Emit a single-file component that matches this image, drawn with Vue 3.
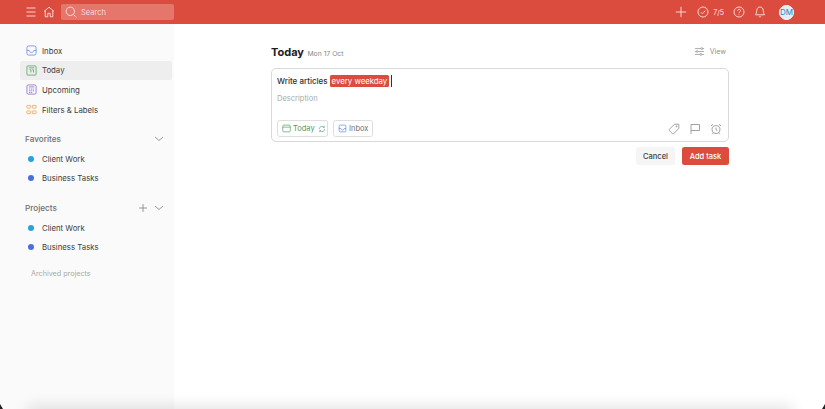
<script setup>
const favorites = [
  { name: 'Client Work', color: '#2aa0dc' },
  { name: 'Business Tasks', color: '#4a6ee0' }
]
const projects = favorites
</script>

<template>
  <div class="app">
    <header class="topbar">
      <div class="left">
        <svg class="ic menu" viewBox="0 0 12 12" width="12" height="12"><path d="M1.500 2h9M1.500 6h9M1.500 10h9" /></svg>
        <svg class="ic home" viewBox="0 0 12 12" width="12" height="12"><path d="M1 5.500 6 1.200l5 4.300M2.200 4.600v6.200h2.600V7.300h2.400v3.500h2.600V4.600" /></svg>
        <div class="search">
          <svg class="ic" viewBox="0 0 12 12" width="12" height="12"><circle cx="5.300" cy="5.300" r="4.200" /><path d="m8.300 8.300 3 3" /></svg>
          <span>Search</span>
        </div>
      </div>
      <div class="right">
        <svg class="ic plus" viewBox="0 0 12 12" width="12" height="12"><path d="M6 .8v10.400M.8 6h10.400" /></svg>
        <div class="karma">
          <svg class="ic" viewBox="0 0 12 12" width="12" height="12"><circle cx="6" cy="6" r="5" /><path d="m3.800 6.100 1.600 1.600 3-3" /></svg>
          <span>7/5</span>
        </div>
        <svg class="ic help" viewBox="0 0 12 12" width="12" height="12"><circle cx="6" cy="6" r="5" /><path d="M4.600 4.800c0-1.900 2.900-1.900 2.900-.1 0 1.100-1.500 1.200-1.500 2.400M6 8.300v.8" /></svg>
        <svg class="ic bell" viewBox="0 0 12 12" width="12" height="12"><path d="M6 1c-2 0-3.200 1.500-3.200 3.300 0 2.700-1.200 3.700-1.300 4.500h9c-.1-.8-1.300-1.800-1.300-4.500C9.200 2.500 8 1 6 1zM4.800 10.300c.5.700 1.900.7 2.400 0" /></svg>
        <div class="avatar">DM</div>
      </div>
    </header>

    <div class="body">
      <aside class="sidebar">
        <nav class="nav">
          <div class="row">
            <svg class="navic" viewBox="0 0 12 12" width="11" height="11" stroke="#6f8fd8"><path d="M1 3a2 2 0 0 1 2-2h6a2 2 0 0 1 2 2v6a2 2 0 0 1-2 2H3a2 2 0 0 1-2-2zM1 6h2.500c.5 1.500 1.300 2.300 2.500 2.300S8 7.500 8.500 6H11" /></svg>
            <span>Inbox</span>
          </div>
          <div class="row active">
            <svg class="navic" viewBox="0 0 12 12" width="11" height="11" stroke="#5ba56a"><rect x="1" y="1" width="10" height="10" rx="1" /><path d="M3 3.200h6M4 5.200h1.400v3M6.800 5.200h1.400v3" /></svg>
            <span>Today</span>
          </div>
          <div class="row">
            <svg class="navic" viewBox="0 0 12 12" width="11" height="11" stroke="#8a6fd8"><rect x="1" y="1" width="10" height="10" rx="1.500" /><path d="M3 3.200h6M3.200 5.500h1.400M5.300 5.500h1.400M7.400 5.500h1.400M3.200 7.400h1.400M5.300 7.400h1.400M7.400 7.400h1.400M3.200 9.200h1.400M5.300 9.200h1.400" /></svg>
            <span>Upcoming</span>
          </div>
          <div class="row">
            <svg class="navic" viewBox="0 0 12 12" width="11" height="11" stroke="#eda65c"><rect x="1" y="1.500" width="4" height="3" rx=".6" /><rect x="7" y="1.500" width="4" height="3" rx=".6" /><rect x="1" y="7.500" width="4" height="3" rx=".6" /><rect x="7" y="7.500" width="4" height="3" rx=".6" /></svg>
            <span>Filters &amp; Labels</span>
          </div>
        </nav>

        <section class="group fav">
          <div class="grouphead">
            <span>Favorites</span>
            <svg class="chev" viewBox="0 0 10 10" width="10" height="10"><path d="m1 3 4 3.500L9 3" /></svg>
          </div>
          <div v-for="f in favorites" :key="f.name" class="row item">
            <i class="dot" :style="{ background: f.color }"></i>
            <span>{{ f.name }}</span>
          </div>
        </section>

        <section class="group proj">
          <div class="grouphead">
            <span>Projects</span>
            <svg class="addp" viewBox="0 0 10 10" width="10" height="10"><path d="M5 1v8M1 5h8" /></svg>
            <svg class="chev" viewBox="0 0 10 10" width="10" height="10"><path d="m1 3 4 3.500L9 3" /></svg>
          </div>
          <div v-for="p in projects" :key="p.name" class="row item">
            <i class="dot" :style="{ background: p.color }"></i>
            <span>{{ p.name }}</span>
          </div>
        </section>

        <div class="archived">Archived projects</div>
      </aside>

      <main class="main">
        <div class="content">
          <div class="pagehead">
            <h1>Today</h1>
            <small>Mon 17 Oct</small>
            <div class="view">
              <svg viewBox="0 0 12 12" width="11" height="11"><path d="M1 2.800h6.500M9.500 2.800H11M1 6h1.500M4.500 6H11M1 9.200h5.500M8.500 9.200H11" /><circle cx="8.500" cy="2.800" r="1" /><circle cx="3.500" cy="6" r="1" /><circle cx="7.500" cy="9.200" r="1" /></svg>
              <span>View</span>
            </div>
          </div>

          <div class="editor">
            <div class="title">
              <span>Write articles</span>
              <mark>every weekday</mark>
              <i class="caret"></i>
            </div>
            <div class="desc">Description</div>
            <div class="tools">
              <button class="chip green">
                <svg viewBox="0 0 12 12" width="9" height="9"><rect x="1" y="1.500" width="10" height="9" rx="1.500" /><path d="M1 4.200h10" /></svg>
                <span>Today</span>
                <svg class="repeat" viewBox="0 0 12 12" width="8" height="8"><path d="M2 6a4 4 0 0 1 7-2.600M10 6a4 4 0 0 1-7 2.600M9.500 1.300v2.300H7.200M2.500 10.700V8.400h2.300" /></svg>
              </button>
              <button class="chip blue">
                <svg viewBox="0 0 12 12" width="9" height="9"><path d="M1.500 3a1.500 1.500 0 0 1 1.500-1.500h6A1.500 1.500 0 0 1 10.500 3v6A1.500 1.500 0 0 1 9 10.500H3A1.500 1.500 0 0 1 1.500 9zM1.500 6h2.300c.4 1.400 1.100 2.200 2.200 2.200s1.800-.8 2.200-2.200h2.300" /></svg>
                <span>Inbox</span>
              </button>
              <div class="actions">
                <svg viewBox="0 0 12 12" width="12" height="12"><path d="M6.500 1.200h4.300v4.300l-5.200 5.200a.8.800 0 0 1-1.100 0L1.300 7.500a.8.800 0 0 1 0-1.100z" /><circle cx="8.600" cy="3.400" r=".5" /></svg>
                <svg viewBox="0 0 12 12" width="12" height="12"><path d="M2 11V1.500h8.500V7.500H2" /></svg>
                <svg viewBox="0 0 12 12" width="12" height="12"><circle cx="6" cy="6.600" r="4" /><path d="M6 4.600v2.200l1.300.8M1 3 3 1.200M11 3 9 1.200M3 10.200 2 11.200M9 10.200l1 1" /></svg>
              </div>
            </div>
          </div>

          <div class="buttons">
            <button class="cancel">Cancel</button>
            <button class="add">Add task</button>
          </div>
        </div>
      </main>
    </div>
    <div class="bottomshade"></div>
    <i class="corner cl"></i>
    <i class="corner cr"></i>
  </div>
</template>

<style scoped>
.app {
  position: relative;
  width: 825px;
  height: 409px;
  overflow: hidden;
  background: #fff;
  font-family: Inter, "Liberation Sans", sans-serif;
  color: #3a3a3a;
}
.topbar {
  height: 24px;
  background: #dc4c3e;
  display: flex;
  align-items: center;
  justify-content: space-between;
  padding: 0 31px 0 25px;
  color: #fff;
}
.ic {
  fill: none;
  stroke: #fbe3e0;
  stroke-width: 0.9;
  flex: none;
}
.left, .right {
  display: flex;
  align-items: center;
}
.home { margin-left: 6px; }
.search {
  margin-left: 6px;
  width: 113px;
  height: 16px;
  border-radius: 2px;
  background: #e5766c;
  display: flex;
  align-items: center;
  gap: 4px;
  padding-left: 4px;
  box-sizing: border-box;
  font-size: 7.500px;
  color: #fbdcd8;
}
.karma {
  display: flex;
  align-items: center;
  gap: 4px;
  margin-left: 10px;
  font-size: 7px;
  color: #fbe3e0;
}
.help { margin-left: 9px; }
.bell { margin-left: 9px; }
.avatar {
  margin-left: 13px;
  width: 15px;
  height: 15px;
  border-radius: 50%;
  background: #dceef8;
  border: 1px solid #fff;
  box-sizing: border-box;
  color: #2b86bd;
  font-size: 8px;
  line-height: 13px;
  text-align: center;
}
.body {
  display: flex;
  height: 385px;
}
.sidebar {
  width: 174px;
  flex: none;
  background: #fafafa;
  padding: 17px 0 0 20px;
  box-sizing: border-box;
  font-size: 7.800px;
}
.row {
  height: 19.600px;
  width: 152px;
  display: flex;
  align-items: center;
  gap: 5px;
  padding-left: 6px;
  box-sizing: border-box;
  border-radius: 2px;
  color: #404040;
}
.row.active { background: #eeeeee; }
.navic {
  fill: none;
  stroke-width: 0.9;
  flex: none;
}
.group { margin-top: 10px; }
.proj { margin-top: 10px; }
.grouphead {
  height: 19.600px;
  width: 152px;
  display: flex;
  align-items: center;
  padding: 0 8px 0 5px;
  box-sizing: border-box;
  color: #707070;
  font-size: 8.200px;
  font-weight: 500;
}
.grouphead span { flex: 1; }
.chev, .addp {
  fill: none;
  stroke: #808080;
  stroke-width: 0.8;
}
.addp { margin-right: 6px; }
.item { gap: 8px; padding-left: 8px; }
.dot {
  width: 6px;
  height: 6px;
  border-radius: 50%;
  flex: none;
}
.archived {
  margin: 7px 0 0 11px;
  height: 19.600px;
  line-height: 19.600px;
  font-size: 7.200px;
  color: #a8a8a8;
}
.main {
  flex: 1;
  padding: 0 96px 0 97px;
  box-sizing: border-box;
}
.content { width: 458px; }
.pagehead {
  display: flex;
  align-items: baseline;
  height: 44px;
  padding-top: 20px;
  box-sizing: border-box;
}
h1 {
  margin: 0;
  font-size: 11px;
  font-weight: 700;
  line-height: 17px;
  color: #202020;
}
small {
  margin-left: 3.500px;
  font-size: 6.800px;
  color: #888;
}
.view {
  margin-left: auto;
  margin-right: 3px;
  margin-top: 2px;
  display: flex;
  align-items: center;
  gap: 5px;
  font-size: 7px;
  color: #909090;
  align-self: flex-start;
}
.view svg { fill: none; stroke: #808080; stroke-width: 0.7; }
.editor {
  height: 74px;
  border: 1px solid #d9d9d9;
  border-radius: 5px;
  box-sizing: border-box;
  padding: 0 5px;
  display: flex;
  flex-direction: column;
}
.title {
  margin-top: 4px;
  height: 16px;
  display: flex;
  align-items: center;
  font-size: 8px;
  color: #303030;
  font-weight: 500;
}
mark {
  margin-left: 2px;
  background: #dc4c3e;
  color: #fff;
  border-radius: 1.500px;
  padding: 0 2px;
  height: 12px;
  line-height: 12px;
  font-size: 7.800px;
  font-weight: 400;
}
.caret {
  width: 1px;
  height: 12px;
  margin-left: 2px;
  background: #333;
}
.desc {
  margin-top: 3px;
  height: 14px;
  line-height: 14px;
  font-size: 7.500px;
  color: #aaa;
}
.tools {
  margin-top: 14px;
  display: flex;
  align-items: center;
  gap: 5px;
}
.chip {
  height: 17px;
  padding: 0 4px;
  border: 1px solid #dedede;
  border-radius: 2.500px;
  background: #fff;
  display: flex;
  align-items: center;
  gap: 2px;
  font: 7.500px Inter, "Liberation Sans", sans-serif;
}
.chip svg { fill: none; stroke-width: 0.9; flex: none; }
.chip .repeat { margin-left: 1px; }
.green { width: 51px; color: #4f9a5f; }
.green svg { stroke: #4f9a5f; }
.blue { width: 40px; color: #707070; }
.blue svg { stroke: #5b84d6; }
.actions {
  margin-left: auto;
  display: flex;
  gap: 9px;
  margin-right: 1px;
}
.actions svg { fill: none; stroke: #8a8a8a; stroke-width: 0.8; }
.buttons {
  margin-top: 5px;
  display: flex;
  justify-content: flex-end;
  gap: 7px;
}
.buttons button {
  height: 18px;
  border: none;
  border-radius: 2.500px;
  padding: 0;
  font: 500 7.500px Inter, "Liberation Sans", sans-serif;
}
.cancel { width: 39px; background: #f5f5f5; color: #404040; }
.add { width: 47px; background: #dc4c3e; color: #fff; }
.bottomshade {
  position: absolute;
  left: 30px;
  right: 35px;
  bottom: -12px;
  height: 12px;
  box-shadow: 0 0 16px 2px rgba(0, 0, 0, 0.13);
}
.corner {
  position: absolute;
  bottom: 0;
  width: 3px;
  height: 5px;
  background: #222;
}
.cl { left: 0; clip-path: polygon(0 0, 100% 100%, 0 100%); }
.cr { right: 0; clip-path: polygon(100% 0, 100% 100%, 0 100%); }
</style>

<style>
html, body { background: #fff; }
</style>
